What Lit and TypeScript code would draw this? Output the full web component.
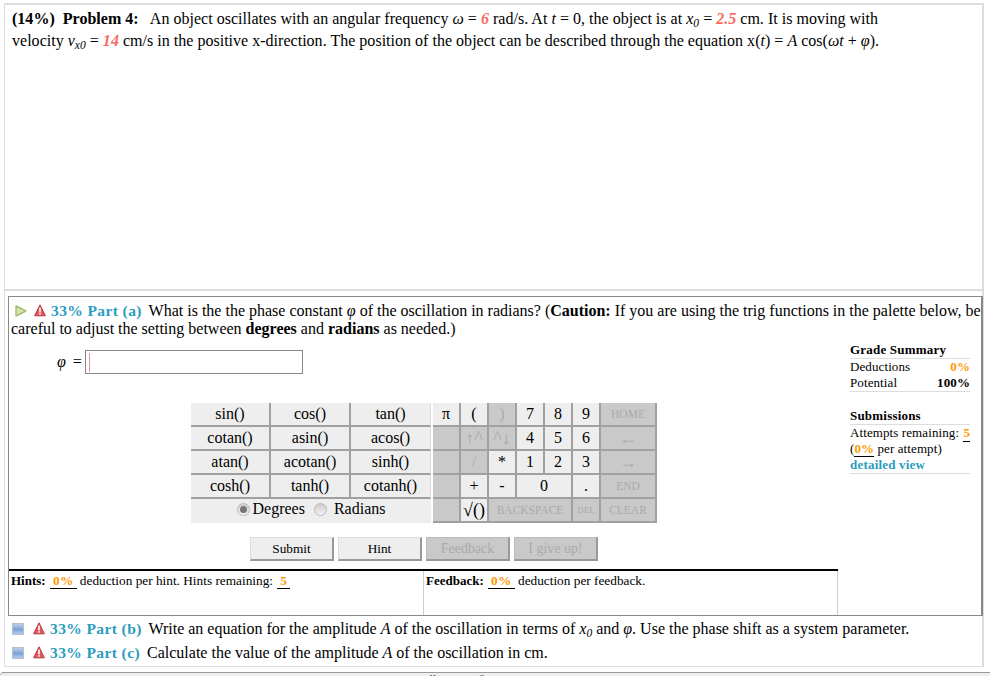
import { LitElement, html, css } from "lit";
import { customElement } from "lit/decorators.js";

const warn = html`<svg class="ico" width="12" height="13" viewBox="0 0 12 13"><path d="M6 .8 L11.4 11.8 H.6 Z" fill="#e5565c" stroke="#b23a40" stroke-width="1" stroke-linejoin="round"/><rect x="5.2" y="3.6" width="1.6" height="4.8" fill="#fff"/><rect x="5.2" y="9.2" width="1.6" height="1.6" fill="#fff"/></svg>`;
const play = html`<svg class="ico" width="12" height="12" viewBox="0 0 12 12"><path d="M1 1 L11 6 L1 11 Z" fill="#d6e4ab" stroke="#a6bf72" stroke-width="1.4" stroke-linejoin="round"/></svg>`;
const minus = html`<svg class="ico" width="12" height="12" viewBox="0 0 12 12"><defs><linearGradient id="g" x1="0" y1="0" x2="0" y2="1"><stop offset="0" stop-color="#c4d4e8"/><stop offset=".55" stop-color="#7ba3d8"/><stop offset="1" stop-color="#bcd2ec"/></linearGradient></defs><rect x=".5" y=".5" width="11" height="11" fill="url(#g)" stroke="#b5c0cc"/></svg>`;

const funcs = ["sin()","cos()","tan()","cotan()","asin()","acos()","atan()","acotan()","sinh()","cosh()","tanh()","cotanh()"];
type K = [string, number, boolean, string?];
const keys: K[] = [
  ["π",1,true],["(",1,true],[")",1,false],["7",1,true],["8",1,true],["9",1,true],["HOME",2,false,"sm"],
  ["",1,false],["↑^",1,false,"ar"],["^↓",1,false,"ar"],["4",1,true],["5",1,true],["6",1,true],["←",2,false,"ar"],
  ["",1,false],["/",1,false],["*",1,true],["1",1,true],["2",1,true],["3",1,true],["→",2,false,"ar"],
  ["",1,false],["+",1,true],["-",1,true],["0",2,true],[".",1,true],["END",2,false,"sm"],
  ["",1,false],["√()",1,true,"ar"],["BACKSPACE",3,false,"sm"],["DEL",1,false,"xs"],["CLEAR",2,false,"sm"],
];

@customElement("app-root")
export class AppRoot extends LitElement {
  static styles = css`
    :host { display: block; width: 990px; height: 676px; overflow: hidden; background: #fff; color: #000;
      font-family: "Liberation Serif", serif; font-size: 16px; position: relative; }
    i { font-style: italic; }
    sub { font-size: 11.5px; line-height: 0; vertical-align: -3px; font-style: italic; }
    .stray { height: 3px; overflow: hidden; }
    .panel { margin-left: 4px; width: 980px; height: 664px; box-sizing: border-box; border: 1px solid #ddd; border-top-width: 2px; border-right-width: 2px; display: flex; flex-direction: column; }
    .problem { height: 286px; box-sizing: border-box; padding: 3px 7px; line-height: 22px; border-bottom: 2px solid #ddd; letter-spacing: .02px; }
    .red { color: #f96b62; font-weight: bold; font-style: italic; }
    .parta { margin: 5px 0 0 3px; width: 975px; height: 320px; box-sizing: border-box; border: 1px solid #888; border-right-width: 2px; display: flex; flex-direction: column; }
    .q { line-height: 18px; padding: 5px 0 0 2px; height: 43px; box-sizing: border-box; white-space: nowrap; }
    .q .part { margin-left: 2px; margin-right: 3px; }
    .ico { vertical-align: -1px; margin-right: 3px; }
    .part { color: #2a9cc0; font-weight: bold; font-size: 15.5px; margin: 0 3px 0 0; letter-spacing: .4px; }
    .body { display: flex; flex: 1; }
    .main { width: 829px; display: flex; flex-direction: column; }
    .ans { display: flex; align-items: center; height: 24px; margin-top: 10px; padding-left: 48px; gap: 3px; word-spacing: 3px; }
    .box { width: 218px; height: 24px; box-sizing: border-box; border: 1px solid #888; padding: 2px 3px; }
    .caret { width: 1px; height: 19px; background: #e8909c; }
    .palette { display: flex; margin: 29px 0 0 182px; }
    .funcs { width: 240px; display: grid; grid-template-columns: repeat(3, 80px); grid-auto-rows: 24px; background: #eee; margin-right: 2px; }
    .f { background: #eee; border-right: 2px solid #a0a0a0; border-bottom: 2px solid #a0a0a0; box-sizing: border-box; display: flex; align-items: center; justify-content: center; font-size: 16px; }
    .f:nth-child(3n) { border-right: 1px solid #ddd; }
    .deg { grid-column: 1 / 4; display: flex; align-items: center; justify-content: center; font-size: 16px; background: #eee; padding-bottom: 4px; box-sizing: border-box; }
    .radio { width: 13px; height: 13px; border-radius: 50%; box-sizing: border-box; border: 1px solid #bbb; background: linear-gradient(#ccc,#f4f4f4); margin-right: 3px; display: inline-flex; align-items: center; justify-content: center; }
    .radio b { width: 7px; height: 7px; border-radius: 50%; background: #777; }
    .gap { width: 9px; }
    .keys { display: grid; grid-template-columns: repeat(8, 28px); grid-auto-rows: 24px; }
    .k { box-sizing: border-box; border-right: 2px solid #a0a0a0; border-bottom: 2px solid #a0a0a0; display: flex; align-items: center; justify-content: center; background: #c9c9c9; color: #aaa; font-size: 16px; white-space: nowrap; }
    .k.on { background: #eee; color: #000; }
    .k.sm { font-size: 11.5px; }
    .k.xs { font-size: 9px; }
    .k.ar { font-size: 18px; }
    .btns { display: flex; gap: 4px; margin: 14px 0 0 241px; }
    .b { width: 84px; height: 24px; box-sizing: border-box; border-right: 2px solid #999; border-bottom: 2px solid #999; border-top: 1px solid #ddd; border-left: 1px solid #ddd; background: #eee; font-size: 13.3px; display: flex; align-items: center; justify-content: center; }
    .b.off { background: #c9c9c9; color: #aaa; border-color: #bbb #999 #999 #bbb; font-size: 14px; }
    .hf { display: flex; margin-top: 8px; border-top: 2px solid #000; flex: 1; font-size: 13.3px; }
    .hint { width: 415px; box-sizing: border-box; padding: 2px 2px; border-right: 1px solid #ccc; }
    .fb { flex: 1; padding: 2px 2px; border-right: 1px solid #ccc; }
    .hf b { font-size: 13px; }
    .u { display: inline-block; border-bottom: 1px solid #000; color: #f90; font-weight: bold; padding: 0 3px; margin: 0 0 0 1px; line-height: 15px; letter-spacing: .3px; }
    .side { margin: 2px 0 0 12px; width: 120px; font-size: 13px; line-height: 16px; letter-spacing: .1px; }
    .side h4 { margin: 0; font-size: 13px; letter-spacing: .2px; border-bottom: 1px solid #ddd; line-height: 16px; }
    .row { display: flex; justify-content: space-between; }
    .sg { border-bottom: 1px solid #ddd; margin-bottom: 16px; }
    .sg.last { margin-bottom: 0; }
    .o { color: #f90; font-weight: bold; }
    .o.ul { box-shadow: 0 1px 0 #000; }
    .link { color: #2a9cc0; font-weight: bold; letter-spacing: .2px; }
    .p2 { padding: 1px 0 0 7px; height: 24px; line-height: 24px; white-space: pre; box-sizing: border-box; }
    .p2 .ico { margin-right: 9px; }
    .p2 .ico + .ico { margin-right: 5px; }
    .foot { margin-top: 5px; border-top: 1px solid #999; background: #eee; height: 6px; border-top-left-radius: 4px; overflow: hidden; font-size: 12px; line-height: 14px; padding-left: 26px; text-align: center; color: #444; }
  `;
  render() {
    return html`
      <div class="stray"></div>
      <div class="panel">
        <div class="problem">
          <b>(14%)&nbsp; Problem 4:</b>&nbsp;&nbsp; An object oscillates with an angular frequency <i>ω</i> = <span class="red">6</span> rad/s. At <i>t</i> = 0, the object is at <i>x</i><sub>0</sub> = <span class="red">2.5</span> cm. It is moving with<br>
          velocity <i>v</i><sub>x0</sub> = <span class="red">14</span> cm/s in the positive x-direction. The position of the object can be described through the equation x(<i>t</i>) = <i>A</i> cos(<i>ωt</i> + <i>φ</i>).
        </div>
        <div class="parta">
          <div class="q">&nbsp;${play}&nbsp;${warn}<span class="part">33% Part (a)</span> What is the the phase constant <i>φ</i> of the oscillation in radians? (<b>Caution:</b> If you are using the trig functions in the palette below, be<br>careful to adjust the setting between <b>degrees</b> and <b>radians</b> as needed.)</div>
          <div class="body">
            <div class="main">
              <div class="ans"><span><i>φ</i> =</span><div class="box"><div class="caret"></div></div></div>
              <div class="palette">
                <div class="funcs">
                  ${funcs.map((f) => html`<div class="f">${f}</div>`)}
                  <div class="deg"><span class="radio"><b></b></span>Degrees<span class="gap"></span><span class="radio"></span>&nbsp;Radians</div>
                </div>
                <div class="keys">
                  ${keys.map(([t, s, on, c]) => html`<div class="k ${on ? "on" : ""} ${c ?? ""}" style="grid-column: span ${s}">${t}</div>`)}
                </div>
              </div>
              <div class="btns">
                <div class="b">Submit</div><div class="b">Hint</div><div class="b off">Feedback</div><div class="b off">I give up!</div>
              </div>
              <div class="hf">
                <div class="hint"><b>Hints:</b> <span class="u">0%</span> deduction per hint. Hints remaining: <span class="u">5</span></div>
                <div class="fb"><b>Feedback:</b> <span class="u">0%</span> deduction per feedback.</div>
              </div>
            </div>
            <div class="side">
              <h4>Grade Summary</h4>
              <div class="sg">
                <div class="row"><span>Deductions</span><span class="o">0%</span></div>
                <div class="row"><span>Potential</span><b>100%</b></div>
              </div>
              <h4>Submissions</h4>
              <div class="sg last">
                <div class="row"><span>Attempts remaining:</span><span class="o ul">5</span></div>
                <div>(<span class="o ul">0%</span> per attempt)</div>
                <div class="link">detailed view</div>
              </div>
            </div>
          </div>
        </div>
        <div class="p2">${minus}${warn}<span class="part">33% Part (b)</span> Write an equation for the amplitude <i>A</i> of the oscillation in terms of <i>x</i><sub>0</sub> and <i>φ</i>. Use the phase shift as a system parameter.</div>
        <div class="p2">${minus}${warn}<span class="part">33% Part (c)</span> Calculate the value of the amplitude <i>A</i> of the oscillation in cm.</div>
      </div>
      <div class="foot">All content © 2017 Expert TA, LLC</div>
    `;
  }
}
